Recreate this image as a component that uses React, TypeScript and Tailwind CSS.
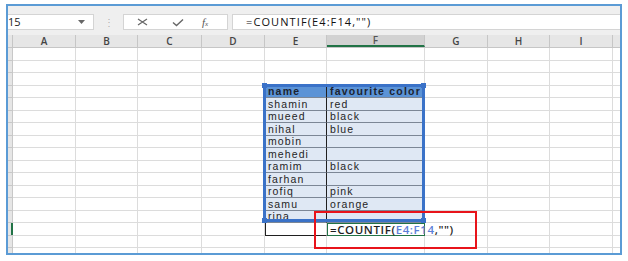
import React from 'react';

const cols = [
  { key: 'A', w: 'w-[63px]' },
  { key: 'B', w: 'w-[62px]' },
  { key: 'C', w: 'w-[64px]' },
  { key: 'D', w: 'w-[63px]' },
  { key: 'E', w: 'w-[62px]' },
  { key: 'F', w: 'w-[98px]' },
  { key: 'G', w: 'w-[63px]' },
  { key: 'H', w: 'w-[62px]' },
  { key: 'I', w: 'w-[63px]' },
  { key: 'J', w: 'w-[40px]' },
];

// table body, rows 5..14
const people: [string, string][] = [
  ['shamin', 'red'],
  ['mueed', 'black'],
  ['nihal', 'blue'],
  ['mobin', ''],
  ['mehedi', ''],
  ['ramim', 'black'],
  ['farhan', ''],
  ['rofiq', 'pink'],
  ['samu', 'orange'],
  ['rina', ''],
];

const font = "font-['Open_Sans','Liberation_Sans',sans-serif]";

function Cell({ row, col }: { row: number; col: string }) {
  const inTable = (col === 'E' || col === 'F') && row >= 4 && row <= 14;
  if (inTable) {
    const isHead = row === 4;
    const text = isHead
      ? col === 'E' ? 'name' : 'favourite color'
      : people[row - 5][col === 'E' ? 0 : 1];
    return (
      <div
        className={`h-full flex items-center pl-[3px] font-['Liberation_Sans',sans-serif] text-[10.5px] leading-none whitespace-nowrap border-b border-[#7c8796] ${
          isHead ? 'bg-[#5b93d6] font-bold text-[#1b2330] tracking-[1.2px]' : 'bg-[#dfe8f4] text-[#1f1f1f] tracking-[1.1px]'
        } ${col === 'E' ? 'border-r border-r-[#202020]' : 'border-r border-r-[#d9d9d9]'}`}
      >
        {text}
      </div>
    );
  }
  if (row === 15 && col === 'E') {
    return <div className="h-full border-l border-b border-[#202020] border-r border-r-[#d9d9d9]" />;
  }
  if (row === 15 && col === 'F') {
    return (
      <div className="relative h-full border border-[#217346] flex items-center pl-[2px] text-[11.5px] font-semibold tracking-[0.6px] text-[#1f1f1f] whitespace-nowrap leading-none">
        <span>=COUNTIF(</span>
        <span className="text-[#5b7fd8]">E4:F14</span>
        <span>,"")</span>
        <span className="ml-[1px] inline-block w-px h-[11px] bg-[#111]" />
      </div>
    );
  }
  return <div className="h-full border-r border-b border-[#dcdcdc]" />;
}

function GridRow({ row }: { row: number }) {
  return (
    <div className="flex h-[12.5px] shrink-0">
      <div className="w-[5px] h-full shrink-0 bg-[#e6e6e6] border-r border-b border-[#c8c8c8] relative">
        {row === 15 && <div className="absolute right-[-1px] top-0 bottom-0 w-[2px] bg-[#217346]" />}
      </div>
      {cols.map((c) => (
        <div key={c.key} className={`${c.w} shrink-0 h-full ${c.key === 'F' && row === 15 ? 'z-10' : ''}`}>
          <Cell row={row} col={c.key} />
        </div>
      ))}
    </div>
  );
}

export default function App() {
  const rows = Array.from({ length: 17 }, (_, i) => i + 1);

  return (
    <div className={`w-[628px] h-[261px] bg-white pt-[4px] pl-[6px] ${font}`}>
      <div className="relative w-[616px] h-[251px] border-2 border-[#5b9bd5] overflow-hidden flex flex-col bg-[#efefef]">
        <div className="h-[8px] shrink-0" />

        {/* formula bar */}
        <div className="h-[16px] shrink-0 flex items-stretch">
          <div className="w-[86px] bg-white border border-[#d4d4d4] border-l-0 flex items-center justify-between pr-[8px] text-[11px] text-[#222]">
            <span>15</span>
            <svg width="7" height="4" viewBox="0 0 7 4"><path d="M0 0h7L3.5 4z" fill="#666" /></svg>
          </div>
          <div className="w-[29px] flex items-center justify-center text-[#b0b0b0] text-[10px] leading-none">⋮</div>
          <div className="w-[105px] bg-white border border-[#d4d4d4] flex items-center">
            <svg className="ml-[13px]" width="11" height="8" viewBox="0 0 11 8">
              <path d="M1 1l9 6M10 1l-9 6" stroke="#666" strokeWidth="1.2" fill="none" />
            </svg>
            <svg className="ml-[24px]" width="12" height="9" viewBox="0 0 12 9">
              <path d="M1 4.5l3.5 3L11 1.5" stroke="#666" strokeWidth="1.4" fill="none" />
            </svg>
            <span className="ml-[18px] font-['Liberation_Serif',serif] italic text-[11px] text-[#555] leading-none">
              f<span className="text-[7px]">x</span>
            </span>
          </div>
          <div className="w-[4px]" />
          <div className="flex-1 bg-white border border-[#d4d4d4] border-r-0 flex items-center pl-[13px] text-[11px] tracking-[1.1px] text-[#111] whitespace-nowrap">
            =COUNTIF(E4:F14,"")
          </div>
        </div>

        <div className="h-[5px] shrink-0" />

        {/* column headers */}
        <div className="h-[13px] shrink-0 flex bg-[#e6e6e6] border-b border-[#c6c6c6]">
          <div className="w-[5px] shrink-0 border-r border-[#c6c6c6]" />
          {cols.map((c) => (
            <div
              key={c.key}
              className={`${c.w} shrink-0 flex items-center justify-center text-[10px] font-semibold text-[#444] border-r border-[#c6c6c6] ${
                c.key === 'F' ? 'bg-[#d2d2d2] border-b-2 border-b-[#217346] text-[#555]' : ''
              }`}
            >
              {c.key === 'J' ? '' : c.key}
            </div>
          ))}
        </div>

        {/* cells */}
        <div className="relative flex-1 flex flex-col bg-white overflow-hidden">
          {rows.map((r) => (
            <GridRow key={r} row={r} />
          ))}

          {/* table selection frame E4:F14 */}
          <div className="absolute left-[255px] top-[36px] w-[162px] h-[138px] border-[3px] border-[#3a72c8] pointer-events-none">
            <div className="absolute -left-[4px] -top-[4px] w-[5px] h-[5px] bg-[#3a72c8]" />
            <div className="absolute -right-[4px] -top-[4px] w-[5px] h-[5px] bg-[#3a72c8]" />
            <div className="absolute -left-[4px] -bottom-[4px] w-[5px] h-[5px] bg-[#3a72c8]" />
            <div className="absolute -right-[4px] -bottom-[4px] w-[5px] h-[5px] bg-[#3a72c8]" />
          </div>

          {/* red highlight */}
          <div className="absolute left-[306px] top-[163px] w-[163px] h-[38px] border-2 border-[#e8141b] pointer-events-none" />
        </div>
      </div>
    </div>
  );
}
